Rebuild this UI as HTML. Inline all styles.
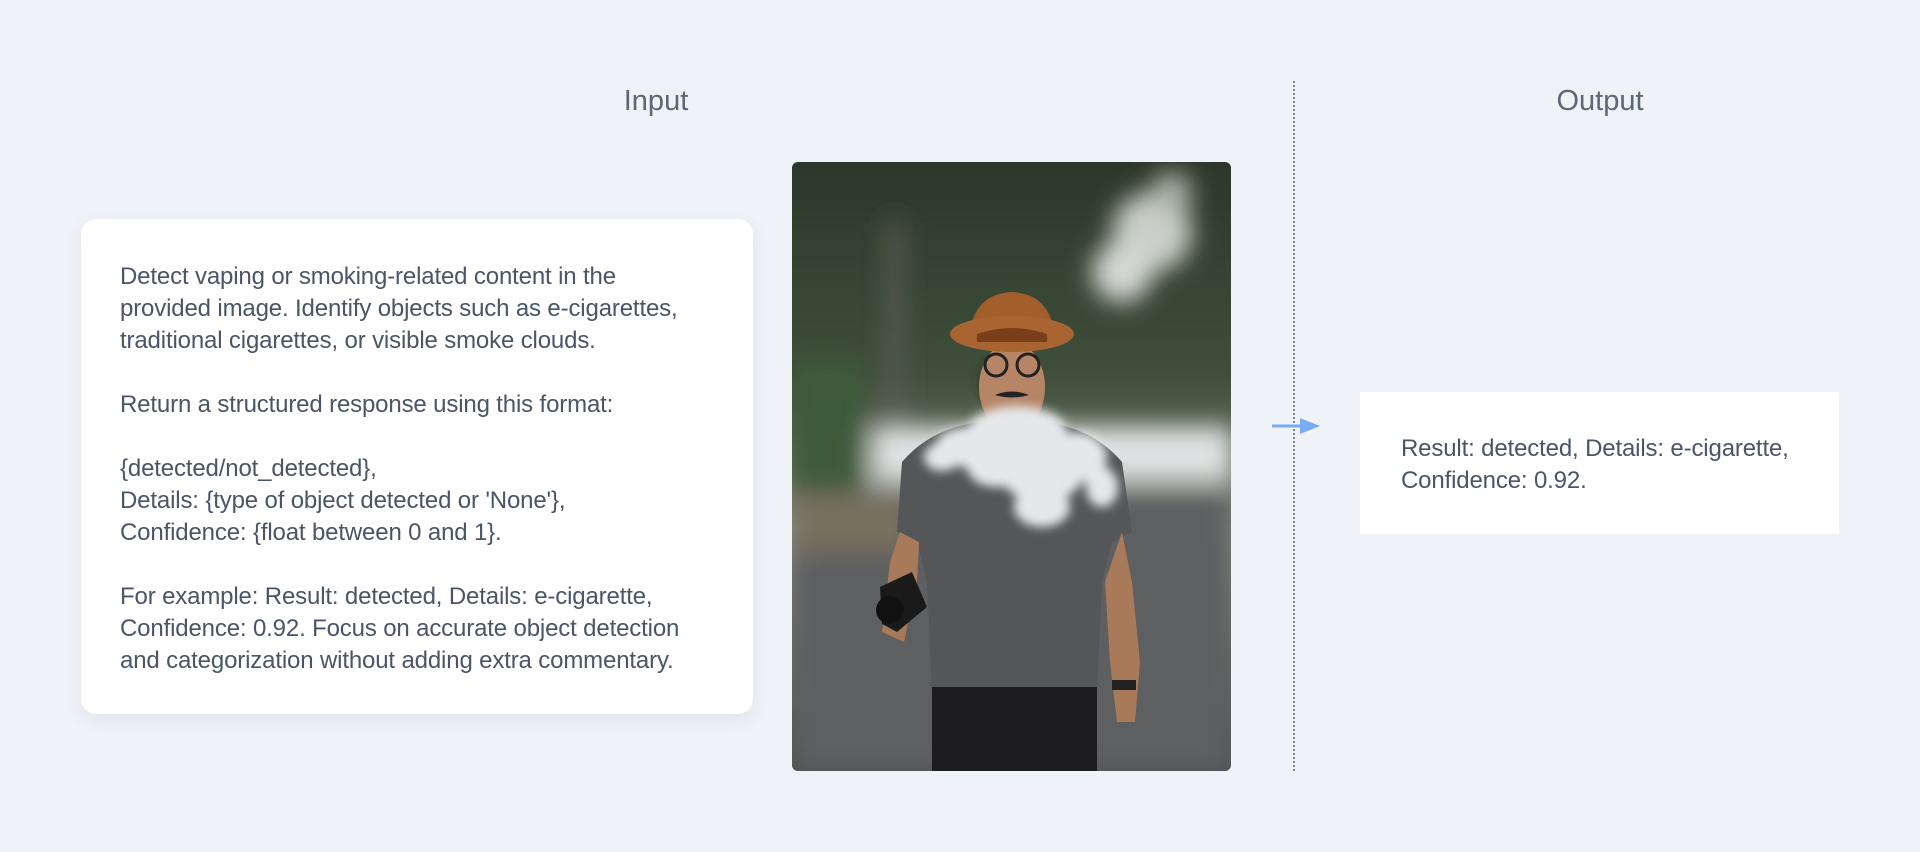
<!DOCTYPE html>
<html><head><meta charset="utf-8"><style>
*{margin:0;padding:0;box-sizing:border-box}
body{width:1920px;height:852px;background:#eff2f7;font-family:"Liberation Sans",sans-serif;position:relative;overflow:hidden;color:#4a5568}
.t{position:absolute;font-size:29px;color:#5d6778;transform:translateX(-50%);top:85px}
.card{position:absolute;left:81px;top:219px;width:672px;height:495px;background:#fff;border-radius:15px;box-shadow:0 6px 18px rgba(60,80,120,.08);padding:42px 20px 41px 39px;font-size:24px;letter-spacing:-0.15px;line-height:32px;color:#4a5568;white-space:nowrap}
.card p{margin-bottom:32px}
.img{position:absolute;left:792px;top:162px;width:439px;height:609px;border-radius:6px;overflow:hidden}
.dash{position:absolute;left:1293px;top:81px;height:690px;border-left:2px dotted #7a8290}
.out{position:absolute;left:1360px;top:392px;width:479px;height:142px;background:#fff;padding:41px 10px 39px 41px;font-size:24px;letter-spacing:-0.15px;line-height:32px;color:#4a5568;white-space:nowrap}
</style></head><body>
<div class="t" style="left:656px">Input</div>
<div class="t" style="left:1600px">Output</div>
<div class="card">
<p>Detect vaping or smoking-related content in the<br>provided image. Identify objects such as e-cigarettes,<br>traditional cigarettes, or visible smoke clouds.</p>
<p>Return a structured response using this format:</p>
<p>{detected/not_detected},<br>Details: {type of object detected or 'None'},<br>Confidence: {float between 0 and 1}.</p>
<p>For example: Result: detected, Details: e-cigarette,<br>Confidence: 0.92. Focus on accurate object detection<br>and categorization without adding extra commentary.</p>
</div>
<div class="img"><svg width="439" height="609" viewBox="0 0 439 609">
<defs>
<linearGradient id="bg" x1="0" y1="0" x2="0" y2="1"><stop offset="0" stop-color="#2c3829"/><stop offset=".35" stop-color="#3f4f3b"/><stop offset=".5" stop-color="#66705f"/><stop offset=".6" stop-color="#8a8c85"/><stop offset="1" stop-color="#4d4f50"/></linearGradient>
<filter id="b" x="-50%" y="-50%" width="200%" height="200%"><feGaussianBlur stdDeviation="12"/></filter>
<filter id="s" x="-50%" y="-50%" width="200%" height="200%"><feGaussianBlur stdDeviation="5"/></filter>
</defs>
<rect width="439" height="609" fill="url(#bg)"/>
<g filter="url(#b)">
<circle cx="360" cy="70" r="40" fill="#c9cfc8"/><circle cx="330" cy="110" r="30" fill="#d4d8d4"/><circle cx="380" cy="30" r="20" fill="#aab3a8"/>
<rect x="80" y="265" width="360" height="55" fill="#dfe2e2"/>
<rect x="0" y="200" width="70" height="140" fill="#3e5a3b"/>
<rect x="95" y="60" width="15" height="200" fill="#5a5d55"/>
<rect x="0" y="330" width="439" height="280" fill="#5d5f60"/>
<rect x="0" y="330" width="120" height="60" fill="#776f5e"/>
</g>
<g filter="url(#s)"><circle cx="210" cy="220" r="22" fill="#2d2b27"/></g>
<path d="M110 300 Q140 265 190 260 L250 260 Q300 265 330 300 L340 370 L320 380 L310 420 L305 530 L140 530 L135 420 L125 380 L105 370 Z" fill="#555657"/>
<path d="M108 370 L98 400 L90 470 L112 480 L125 420 L127 380 Z" fill="#a87a5a"/>
<path d="M330 370 L340 420 L348 500 L343 560 L325 560 L318 500 L313 420 Z" fill="#a87a5a"/>
<rect x="140" y="525" width="165" height="90" fill="#1d1d1f"/>
<path d="M88 425 L120 410 L135 445 L105 470 L90 462 Z" fill="#1a1a1a"/>
<circle cx="98" cy="448" r="14" fill="#111"/>
<rect x="320" y="518" width="24" height="10" fill="#222"/>
<ellipse cx="220" cy="225" rx="33" ry="45" fill="#b58566"/>
<path d="M178 170 Q183 132 220 130 Q257 132 262 170 Z" fill="#a25f2c"/>
<ellipse cx="220" cy="172" rx="62" ry="18" fill="#a86431"/>
<path d="M185 172 Q220 160 255 172 L255 180 L185 180Z" fill="#7a3f1a"/>
<circle cx="204" cy="203" r="11" fill="none" stroke="#222" stroke-width="3"/><circle cx="236" cy="203" r="11" fill="none" stroke="#222" stroke-width="3"/>
<path d="M203 233 Q220 226 237 233 Q220 238 203 233Z" fill="#222"/>
<g filter="url(#s)" fill="#e6e7e9">
<ellipse cx="225" cy="270" rx="50" ry="26"/><ellipse cx="175" cy="285" rx="32" ry="20"/><ellipse cx="250" cy="310" rx="42" ry="30"/><ellipse cx="285" cy="295" rx="30" ry="25"/><ellipse cx="250" cy="345" rx="28" ry="20"/><ellipse cx="150" cy="295" rx="18" ry="14"/><ellipse cx="310" cy="325" rx="16" ry="20"/><ellipse cx="205" cy="305" rx="30" ry="20"/>
</g>
</svg></div>
<div class="dash"></div>
<svg style="position:absolute;left:1272px;top:416px" width="50" height="20"><line x1="0" y1="10" x2="30" y2="10" stroke="#7aabf5" stroke-width="3"/><path d="M28 2 L48 10 L28 18Z" fill="#7aabf5"/></svg>
<div class="out">Result: detected, Details: e-cigarette,<br>Confidence: 0.92.</div>
</body></html>
